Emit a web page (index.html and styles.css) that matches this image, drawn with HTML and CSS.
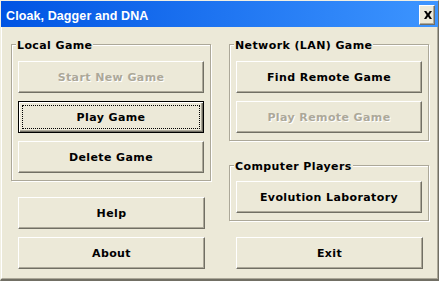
FILE: index.html
```html
<!DOCTYPE html>
<html>
<head>
<meta charset="utf-8">
<title>Cloak, Dagger and DNA</title>
<link rel="stylesheet" href="styles.css">
</head>
<body>
<div class="window">
  <div class="titlebar">
    <span class="title">Cloak, Dagger and DNA</span>
    <button class="close" aria-label="Close">
      <svg width="8" height="8" viewBox="0 0 8 8"><path d="M0 0H2.3L4 2.5L5.7 0H8L5.4 4L8 8H5.7L4 5.5L2.3 8H0L2.6 4Z" fill="#000"/></svg>
    </button>
  </div>
  <div class="client">
    <div class="col">
      <fieldset class="group">
        <legend>Local Game</legend>
        <div class="stack">
          <button class="btn" disabled><span class="face">Start New Game</span></button>
          <button class="btn default"><span class="face focus">Play Game</span></button>
          <button class="btn"><span class="face">Delete Game</span></button>
        </div>
      </fieldset>
      <div class="solo first-solo"><button class="btn"><span class="face">Help</span></button></div>
      <div class="solo"><button class="btn"><span class="face">About</span></button></div>
    </div>
    <div class="col">
      <fieldset class="group">
        <legend>Network (LAN) Game</legend>
        <div class="stack">
          <button class="btn"><span class="face">Find Remote Game</span></button>
          <button class="btn" disabled><span class="face">Play Remote Game</span></button>
        </div>
      </fieldset>
      <fieldset class="group group-cpu">
        <legend>Computer Players</legend>
        <div class="stack">
          <button class="btn"><span class="face">Evolution Laboratory</span></button>
        </div>
      </fieldset>
      <div class="solo exit"><button class="btn"><span class="face">Exit</span></button></div>
    </div>
  </div>
</div>
</body>
</html>
```
FILE: styles.css
```css
html, body {
  margin: 0;
  padding: 0;
  background: #ECE9D8;
}

.window {
  width: 439px;
  height: 281px;
  box-sizing: border-box;
  border-style: solid;
  border-width: 1px 1px 2px 1px;
  border-color: #F1EFE2 #716F64 #716F64 #F1EFE2;
  display: flex;
  flex-direction: column;
  background: #ECE9D8;
}

.titlebar {
  height: 26px;
  flex: none;
  display: flex;
  align-items: flex-start;
  justify-content: space-between;
  background: linear-gradient(to right, #0054E3, #3D95FF);
  padding: 0 3px 0 5px;
}

.title {
  color: #fff;
  font: bold 12.5px "Liberation Sans", Arial, sans-serif;
  letter-spacing: 0.1px;
  line-height: 14px;
  margin-top: 8px;
}

.close {
  appearance: none;
  margin: 4px 0 0 0;
  padding: 0;
  width: 16px;
  height: 20px;
  box-sizing: border-box;
  background: #ECE9D8;
  border: 1px solid;
  border-color: #fff #716F64 #716F64 #fff;
  box-shadow: inset -1px -1px #ACA899;
  display: flex;
  align-items: center;
  justify-content: center;
}

.close svg {
  display: block;
  margin-left: 1px;
}

.client {
  flex: 1;
  display: flex;
  gap: 18px;
  border-style: solid;
  border-width: 0 1px 1px 1px;
  border-color: #fff #ACA899 #ACA899 #fff;
  padding: 10px 0 0 9px;
  font: bold 11px "DejaVu Sans", Verdana, sans-serif;
  letter-spacing: 0.4px;
  color: #000;
}

.col {
  width: 200px;
  display: flex;
  flex-direction: column;
}

.group {
  margin: 0;
  min-width: 0;
  border: 1px solid #ACA899;
  box-shadow: inset 1px 1px #fff, 1px 1px #fff;
  padding: 9px 6px 7px 6px;
}

.group-cpu {
  margin-top: 17px;
  padding-top: 8px;
}

legend {
  padding: 2px 1px 0 1px;
  margin-left: -2px;
  background: #ECE9D8;
  line-height: 13px;
}

.stack {
  display: flex;
  flex-direction: column;
  gap: 8px;
}

.solo {
  padding: 0 6px 0 7px;
  margin-top: 8px;
}

.first-solo {
  margin-top: 16px;
}

.exit {
  margin-top: 16px;
}

.btn {
  appearance: none;
  margin: 0;
  width: 100%;
  height: 32px;
  box-sizing: border-box;
  padding: 3px;
  display: flex;
  background: #ECE9D8;
  border: 1px solid;
  border-color: #fff #716F64 #716F64 #fff;
  box-shadow: inset -1px -1px #ACA899;
  font: inherit;
  letter-spacing: inherit;
  color: #000;
}

.btn.default {
  border-color: #000;
  box-shadow: inset 1px 1px #fff, inset -1px -1px #716F64, inset -2px -2px #ACA899;
}

.btn:disabled {
  color: #ACA899;
  text-shadow: 1px 1px #fff;
}

.face {
  flex: 1;
  display: flex;
  align-items: center;
  justify-content: center;
  border: 1px dotted transparent;
}

.face.focus {
  border-color: #000;
}
```
